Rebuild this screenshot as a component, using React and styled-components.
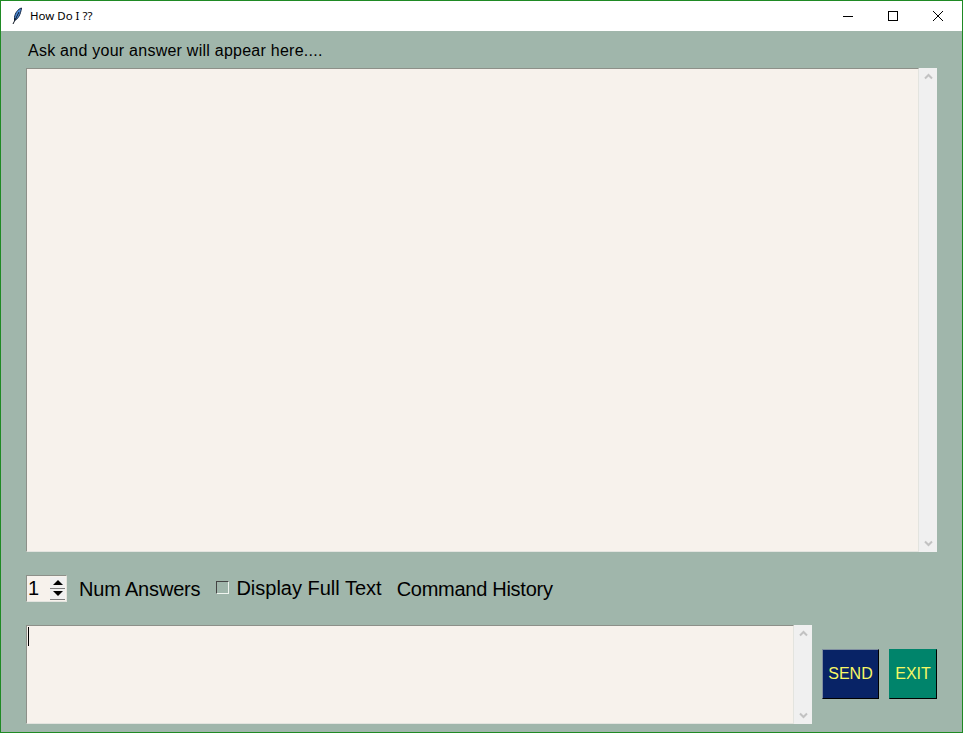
import React from "react";
import styled, { createGlobalStyle } from "styled-components";

const Global = createGlobalStyle`
  html, body { margin: 0; padding: 0; background: #a0b6ab; }
  #root { width: 963px; height: 733px; overflow: hidden; }
  * { box-sizing: border-box; }
`;

const Window = styled.div`
  width: 963px;
  height: 733px;
  display: flex;
  flex-direction: column;
  border: 1px solid #1f8a24;
  background: #a0b6ab;
  font-family: "Liberation Sans", Arial, sans-serif;
  color: #000;
`;

const TitleBar = styled.header`
  height: 30px;
  flex: none;
  background: #fff;
  display: flex;
  align-items: center;
  padding-left: 9px;
  padding-right: 1px;
`;

const AppIcon = styled.svg`
  width: 14px;
  height: 18px;
  flex: none;
  margin-right: 6px;
`;

const TitleText = styled.span`
  font-family: "Noto Sans", "Open Sans", sans-serif;
  font-size: 11.5px;
  line-height: 30px;
  flex: 1;
`;

const WinButton = styled.div`
  width: ${(p) => p.$w || 45}px;
  height: 30px;
  display: flex;
  align-items: center;
  justify-content: center;
`;

const Content = styled.main`
  flex: 1;
  display: flex;
  flex-direction: column;
  padding: 0 25px 8px 25px;
`;

const Heading = styled.div`
  height: 37px;
  flex: none;
  padding-left: 2px;
  padding-top: 10px;
  font-size: 16px;
  line-height: 19px;
  letter-spacing: 0.25px;
`;

const TextPane = styled.div`
  display: flex;
  height: ${(p) => p.$h}px;
  flex: ${(p) => (p.$grow ? 1 : "none")};
`;

const TextArea = styled.div`
  flex: 1;
  position: relative;
  background: #f7f2ec;
  border-top: 1px solid #8d9089;
  border-left: 1px solid #8d9089;
  border-right: 1px solid #e3e4df;
  border-bottom: 1px solid #e3e4df;
`;

const Caret = styled.span`
  position: absolute;
  left: 1px;
  top: 1px;
  width: 1px;
  height: 19px;
  background: #000;
`;

const ScrollBar = styled.div`
  width: ${(p) => p.$w}px;
  flex: none;
  background: #f0f0f0;
  display: flex;
  flex-direction: column;
  align-items: center;
  justify-content: space-between;
  padding: 5px 0;
`;

const Chevron = styled.svg`
  width: 9px;
  height: 7px;
  display: block;
`;

const Controls = styled.div`
  height: 73px;
  flex: none;
  display: flex;
  align-items: flex-start;
  padding-top: 23px;
`;

const Spinner = styled.div`
  width: 41px;
  height: 27px;
  background: #f7f2ec;
  border-top: 1px solid #8d9089;
  border-left: 1px solid #8d9089;
  border-right: 1px solid #e3e4df;
  border-bottom: 1px solid #e3e4df;
  display: flex;
  justify-content: space-between;
  margin-right: 12px;
`;

const SpinValue = styled.span`
  font-size: 20px;
  line-height: 25px;
  padding-left: 1px;
`;

const SpinArrows = styled.div`
  width: 15px;
  display: flex;
  flex-direction: column;
  margin: 1px 1px 1px 0;
`;

const SpinArrow = styled.div`
  flex: 1;
  background: #f0f0f0;
  display: flex;
  align-items: center;
  justify-content: center;
  border-bottom: 1px solid #7d7d7d;
  &:before {
    content: "";
    width: 0;
    height: 0;
    border-left: 5px solid transparent;
    border-right: 5px solid transparent;
    ${(p) => (p.$top ? "border-bottom: 5px solid #000;" : "border-top: 5px solid #000;")}
  }
`;

const ControlLabel = styled.span`
  font-size: 20px;
  line-height: 26px;
  letter-spacing: ${(p) => p.$ls || 0}px;
  margin-top: ${(p) => p.$dy || 0}px;
  margin-left: ${(p) => p.$ml || 0}px;
  white-space: nowrap;
`;

const CheckBox = styled.span`
  width: 13px;
  height: 13px;
  margin: 6px 7px 0 16px;
  flex: none;
  background: #a0b6ab;
  border-top: 1px solid #444;
  border-left: 1px solid #444;
  border-right: 1px solid #f0f5f0;
  border-bottom: 1px solid #f0f5f0;
`;

const BottomRow = styled.div`
  flex: 1;
  display: flex;
  min-height: 0;
`;

const ButtonColumn = styled.div`
  flex: none;
  display: flex;
  gap: 10px;
  margin-left: 10px;
  padding-top: 24px;
  align-items: flex-start;
`;

const ActionButton = styled.button`
  width: ${(p) => p.$w}px;
  height: 50px;
  padding: 0;
  background: ${(p) => p.$bg};
  color: #f7f765;
  font-family: "Liberation Sans", Arial, sans-serif;
  font-size: 16px;
  border-style: solid;
  border-width: 1px;
  border-color: ${(p) => p.$edge} #000 #000 ${(p) => p.$edge};
`;

const ChevUp = () => (
  <Chevron viewBox="0 0 9 7">
    <path d="M1 5.5 L4.5 2 L8 5.5" fill="none" stroke="#c2c2c2" strokeWidth="2" />
  </Chevron>
);
const ChevDown = () => (
  <Chevron viewBox="0 0 9 7">
    <path d="M1 1.5 L4.5 5 L8 1.5" fill="none" stroke="#c2c2c2" strokeWidth="2" />
  </Chevron>
);

export default function App() {
  return (
    <Window>
      <Global />
      <TitleBar>
        <AppIcon viewBox="0 0 14 18">
          <path d="M11.5 1 C8 2 5 6 4.5 10.5 L4.5 13.5 C8 12 10.5 8 11.5 1 Z" fill="#4f8fe0" stroke="#12233f" strokeWidth="1" />
          <path d="M9 5 L3 17" stroke="#0c1520" strokeWidth="1" />
        </AppIcon>
        <TitleText>How Do I ??</TitleText>
        <WinButton>
          <svg width="10" height="10" viewBox="0 0 10 10"><path d="M0 5.5H10" stroke="#000" /></svg>
        </WinButton>
        <WinButton>
          <svg width="10" height="10" viewBox="0 0 10 10"><rect x="0.5" y="0.5" width="9" height="9" fill="none" stroke="#000" /></svg>
        </WinButton>
        <WinButton $w={46}>
          <svg width="10" height="10" viewBox="0 0 10 10"><path d="M0 0L10 10M10 0L0 10" stroke="#000" /></svg>
        </WinButton>
      </TitleBar>
      <Content>
        <Heading>Ask and your answer will appear here....</Heading>
        <TextPane $h={484}>
          <TextArea />
          <ScrollBar $w={18}><ChevUp /><ChevDown /></ScrollBar>
        </TextPane>
        <Controls>
          <Spinner>
            <SpinValue>1</SpinValue>
            <SpinArrows>
              <SpinArrow $top />
              <SpinArrow />
            </SpinArrows>
          </Spinner>
          <ControlLabel $dy={1} $ls={-0.18}>Num Answers</ControlLabel>
          <CheckBox />
          <ControlLabel>Display Full Text</ControlLabel>
          <ControlLabel $dy={1} $ml={15} $ls={-0.27}>Command History</ControlLabel>
        </Controls>
        <BottomRow>
          <TextPane $grow>
            <TextArea><Caret /></TextArea>
            <ScrollBar $w={18}><ChevUp /><ChevDown /></ScrollBar>
          </TextPane>
          <ButtonColumn>
            <ActionButton $w={57} $bg="#082366" $edge="#7f8ea0">SEND</ActionButton>
            <ActionButton $w={48} $bg="#00846b" $edge="#00846b">EXIT</ActionButton>
          </ButtonColumn>
        </BottomRow>
      </Content>
    </Window>
  );
}
